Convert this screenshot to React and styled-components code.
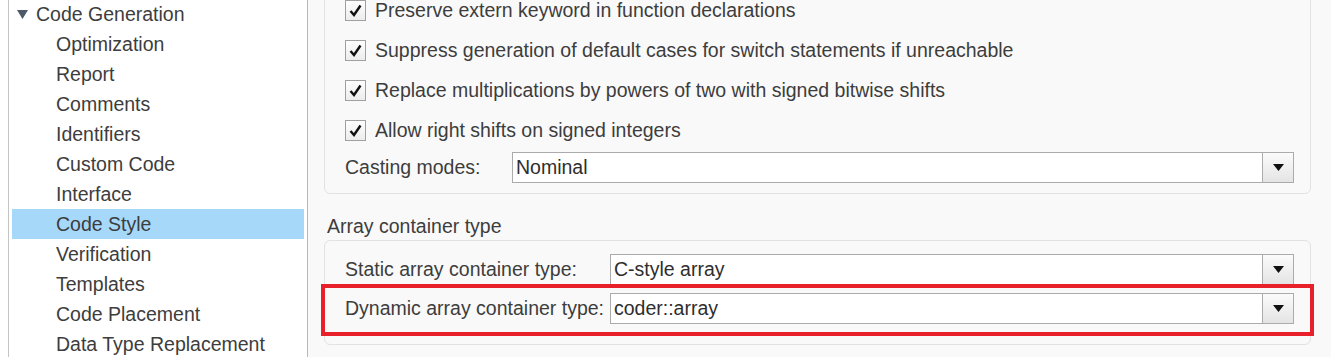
import React from 'react';
import styled, { createGlobalStyle } from 'styled-components';

const GlobalStyle = createGlobalStyle`
  *, *::before, *::after {
    box-sizing: border-box;
  }
  html, body {
    margin: 0;
    padding: 0;
    background: #ffffff;
  }
  body {
    font-family: "Liberation Sans", Arial, sans-serif;
    color: #3d3d3d;
  }
`;

const treeItems = [
  'Optimization',
  'Report',
  'Comments',
  'Identifiers',
  'Custom Code',
  'Interface',
  'Code Style',
  'Verification',
  'Templates',
  'Code Placement',
  'Data Type Replacement',
];

const checkOptions = [
  'Preserve extern keyword in function declarations',
  'Suppress generation of default cases for switch statements if unreachable',
  'Replace multiplications by powers of two with signed bitwise shifts',
  'Allow right shifts on signed integers',
];

const Page = styled.div`
  display: flex;
  height: 357px;
  overflow: hidden;
  font-size: 19.5px;
`;

const Sidebar = styled.div`
  width: 300px;
  margin-left: 8px;
  flex-shrink: 0;
  background: #fff;
  border-left: 1px solid #c4c4c4;
  border-right: 1px solid #b8b8b8;
  padding: 0 3px;
`;

const TreeList = styled.div`
  margin-top: -1px;
`;

const TreeRow = styled.div`
  height: 30px;
  display: flex;
  align-items: center;
  padding-left: ${({ depth }) => (depth ? 44 : 5)}px;
  background: ${({ selected }) => (selected ? '#a6d8fa' : 'transparent')};
  white-space: nowrap;
`;

const Caret = styled.svg`
  width: 11px;
  height: 9px;
  margin-right: 8px;
  flex-shrink: 0;
`;

const Content = styled.div`
  flex: 1;
  background: #f9f9f9;
  padding: 0 20px 0 16px;
`;

const Panel = styled.div`
  background: #f9f9f9;
  border: 1px solid #e2e2e2;
  border-radius: 6px;
  padding: ${({ first }) => (first ? '0 16px 10px 20px' : '13px 16px 20px 20px')};
  margin-top: ${({ first }) => (first ? '-11px' : '0')};
`;

const CheckRow = styled.div`
  height: 40px;
  display: flex;
  align-items: center;
  gap: 9px;
  white-space: nowrap;
`;

const CheckBox = styled.span`
  width: 21px;
  height: 21px;
  border: 1px solid #a0a0a0;
  background: linear-gradient(#ffffff, #ececec);
  display: flex;
  align-items: center;
  justify-content: center;
  flex-shrink: 0;
`;

const FieldRow = styled.div`
  position: relative;
  display: flex;
  align-items: center;
  margin-top: ${({ gap }) => gap || 0}px;
`;

const FieldLabel = styled.span`
  width: ${({ w }) => w}px;
  flex-shrink: 0;
  white-space: nowrap;
`;

const Select = styled.div`
  flex: 1;
  height: 31px;
  display: flex;
  border: 1px solid #ababab;
  background: #fff;
`;

const SelectValue = styled.span`
  flex: 1;
  display: flex;
  align-items: center;
  padding-left: 3px;
  color: #2e2e2e;
  line-height: 1;
`;

const SelectButton = styled.span`
  width: 31px;
  border-left: 1px solid #ababab;
  background: linear-gradient(#fbfbfb, #e4e4e4);
  display: flex;
  align-items: center;
  justify-content: center;
`;

const SectionTitle = styled.div`
  padding: 22px 0 4px 3px;
  line-height: 20px;
`;

const Highlight = styled.div`
  position: absolute;
  left: -24px;
  right: -20px;
  top: -9px;
  bottom: -12px;
  border: 4px solid #e8202a;
  pointer-events: none;
`;

const CheckMark = () => (
  <svg width="13" height="13" viewBox="0 0 13 13">
    <path d="M1.5 7 L5 11 L11.5 1.5" fill="none" stroke="#111" strokeWidth="2.4" />
  </svg>
);

const Arrow = () => (
  <svg width="11" height="7" viewBox="0 0 11 7">
    <path d="M0 0 H11 L5.5 7 Z" fill="#111" />
  </svg>
);

const Dropdown = ({ value }) => (
  <Select>
    <SelectValue>{value}</SelectValue>
    <SelectButton>
      <Arrow />
    </SelectButton>
  </Select>
);

export default function App() {
  return (
    <>
      <GlobalStyle />
      <Page>
        <Sidebar>
          <TreeList>
            <TreeRow>
              <Caret viewBox="0 0 11 9">
                <path d="M0 0 H11 L5.5 9 Z" fill="#4b5968" />
              </Caret>
              Code Generation
            </TreeRow>
            {treeItems.map((item) => (
              <TreeRow key={item} depth={1} selected={item === 'Code Style'}>
                {item}
              </TreeRow>
            ))}
          </TreeList>
        </Sidebar>
        <Content>
          <Panel first>
            {checkOptions.map((text) => (
              <CheckRow key={text}>
                <CheckBox>
                  <CheckMark />
                </CheckBox>
                {text}
              </CheckRow>
            ))}
            <FieldRow gap={2}>
              <FieldLabel w={167}>Casting modes:</FieldLabel>
              <Dropdown value="Nominal" />
            </FieldRow>
          </Panel>
          <SectionTitle>Array container type</SectionTitle>
          <Panel>
            <FieldRow>
              <FieldLabel w={265}>Static array container type:</FieldLabel>
              <Dropdown value="C-style array" />
            </FieldRow>
            <FieldRow gap={8}>
              <FieldLabel w={265}>Dynamic array container type:</FieldLabel>
              <Dropdown value="coder::array" />
              <Highlight />
            </FieldRow>
          </Panel>
        </Content>
      </Page>
    </>
  );
}
